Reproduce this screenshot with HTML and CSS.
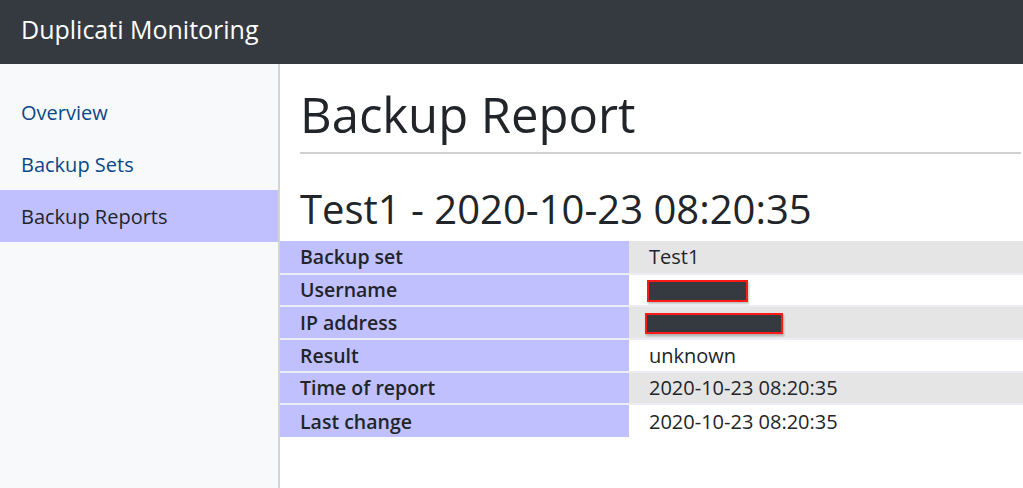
FILE: index.html
```html
<!DOCTYPE html>
<html lang="en">
<head>
<meta charset="utf-8">
<title>Duplicati Monitoring</title>
<link rel="stylesheet" href="styles.css">
</head>
<body>
<header class="topbar">
  <span class="brand">Duplicati Monitoring</span>
</header>
<div class="layout">
  <aside class="sidebar">
    <nav class="nav">
      <a class="nav-link" href="#">Overview</a>
      <a class="nav-link" href="#">Backup Sets</a>
      <a class="nav-link active" href="#">Backup Reports</a>
    </nav>
  </aside>
  <main class="content">
    <div class="page-head">
      <h1 class="title">Backup Report</h1>
      <hr class="rule">
      <h2 class="subtitle">Test1 - 2020-10-23 08:20:35</h2>
    </div>
    <table class="report">
      <tbody>
        <tr class="odd"><th>Backup set</th><td>Test1</td></tr>
        <tr><th>Username</th><td><span class="redact redact-user"></span></td></tr>
        <tr class="odd"><th>IP address</th><td><span class="redact redact-ip"></span></td></tr>
        <tr><th>Result</th><td>unknown</td></tr>
        <tr class="odd"><th>Time of report</th><td>2020-10-23 08:20:35</td></tr>
        <tr><th>Last change</th><td>2020-10-23 08:20:35</td></tr>
      </tbody>
    </table>
  </main>
</div>
</body>
</html>
```
FILE: styles.css
```css
* { box-sizing: border-box; }
html, body { margin: 0; padding: 0; }
body {
  font-family: "Open Sans", "Noto Sans", sans-serif;
  color: #212529;
  background: #fff;
  width: 1023px;
  height: 488px;
  overflow: hidden;
}
.topbar {
  height: 64px;
  background: #343a40;
  display: flex;
  align-items: center;
  padding-left: 21px;
  padding-bottom: 7px;
}
.brand {
  color: #fff;
  font-size: 25px;
}
.layout {
  display: flex;
  height: 424px;
}
.sidebar {
  width: 280px;
  flex: none;
  background: #f8f9fa;
  border-right: 2px solid #d5d5d5;
  padding-top: 22px;
}
.nav { display: flex; flex-direction: column; }
.nav-link {
  display: block;
  height: 52px;
  padding-top: 1px;
  line-height: 51px;
  padding-left: 21px;
  font-size: 20px;
  color: #0b4788;
  text-decoration: none;
}
.nav-link.active {
  background: #c0c0ff;
  color: #212529;
}
.content {
  flex: 1;
  min-width: 0;
}
.page-head { padding: 0 2px 0 20px; }
.title {
  margin: 0;
  padding-top: 15px;
  font-size: 49px;
  font-weight: 400;
  line-height: 71px;
}
.rule {
  margin: 2px 0 0 0;
  border: 0;
  border-top: 2px solid #d0d0d0;
}
.subtitle {
  margin: 0;
  padding-top: 22px;
  font-size: 40px;
  font-weight: 400;
  line-height: 65px;
}
.report {
  width: 100%;
  border-collapse: collapse;
  font-size: 20px;
}
.report th, .report td {
  height: 32.67px;
  padding: 0 20px;
  text-align: left;
  border-top: 2px solid #ececf4;
  vertical-align: middle;
}
.report tr:first-child th, .report tr:first-child td { border-top: 0; }
.report th {
  width: 349px;
  background: #c0c0ff;
  font-weight: 600;
  font-size: 19.5px;
}
.report td { background: #fff; }
.report tr.odd td { background: #e5e5e5; }
.redact {
  display: inline-block;
  vertical-align: middle;
  background: #343a40;
  border: 2px solid #ff1a1a;
  box-shadow: 1px 2px 2px rgba(0,0,0,0.25);
}
.redact-user { width: 101px; height: 22px; margin-left: -2px; margin-top: -2px; }
.redact-ip { width: 138px; height: 21px; margin-left: -4px; margin-top: -2px; }
```
